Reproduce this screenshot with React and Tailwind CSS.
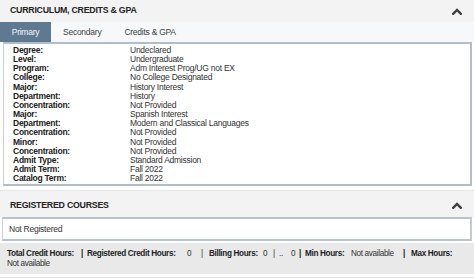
import React from "react";

const rows = [
  ["Degree:", "Undeclared"],
  ["Level:", "Undergraduate"],
  ["Program:", "Adm Interest Prog/UG not EX"],
  ["College:", "No College Designated"],
  ["Major:", "History Interest"],
  ["Department:", "History"],
  ["Concentration:", "Not Provided"],
  ["Major:", "Spanish Interest"],
  ["Department:", "Modern and Classical Languages"],
  ["Concentration:", "Not Provided"],
  ["Minor:", "Not Provided"],
  ["Concentration:", "Not Provided"],
  ["Admit Type:", "Standard Admission"],
  ["Admit Term:", "Fall 2022"],
  ["Catalog Term:", "Fall 2022"],
];

function Chevron() {
  return (
    <svg width="10" height="7" viewBox="0 0 10 7" className="block">
      <polyline points="1.2,5.8 5,2 8.8,5.8" fill="none" stroke="#3f3f3f" strokeWidth="2.4" strokeLinecap="square" />
    </svg>
  );
}

export default function App() {
  const seg = [
    ["Total Credit Hours:", true, "w-[74px]"],
    ["|", true, "w-[6px]"],
    ["Registered Credit Hours:", true, "w-[100px]"],
    ["0", false, "w-[14px]"],
    ["|", false, "w-[8px]"],
    ["Billing Hours:", true, "w-[54px]"],
    ["0", false, "w-[10px]"],
    ["|", false, "w-[6px]"],
    ["..", false, "w-[12px]"],
    ["0", false, "w-[8px]"],
    ["|", true, "w-[6px]"],
    ["Min Hours:", true, "w-[46px]"],
    ["Not available", false, "w-[52px]"],
    ["|", true, "w-[8px]"],
    ["Max Hours:", true, "w-auto"],
  ];
  return (
    <div className="w-[474px] h-[280px] overflow-hidden bg-white font-['Liberation_Sans',Arial,sans-serif] text-[8.5px] tracking-[-0.25px] text-[#222]">
      {/* Section 1 header */}
      <div className="h-[22px] bg-[#f3f3f3] flex items-center justify-between pl-[10px] pr-[12px]">
        <span className="font-bold text-[8.8px] tracking-[-0.25px] text-[#222]">CURRICULUM, CREDITS &amp; GPA</span>
        <Chevron />
      </div>
      {/* Tabs */}
      <div className="h-[20px] bg-[#f6f8fa] flex items-stretch">
        <div className="w-[51px] bg-[#5f7a90] text-[#f2f5f8] flex items-center justify-center">Primary</div>
        <div className="pl-[12px] flex items-center text-[#444]">Secondary</div>
        <div className="pl-[23px] flex items-center text-[#444]">Credits &amp; GPA</div>
      </div>
      {/* Content box */}
      <div className="ml-[3px] mr-[2px] border-t-2 border-r-2 border-b-2 border-l border-t-[#b1bdc8] border-r-[#b1bdc8] border-b-[#b1bdc8] border-l-[#c9d3dc] pt-[2px] pb-[1px] pl-[9px]">
        {rows.map(([k, v], i) => (
          <div key={i} className="grid grid-cols-[117px_1fr] leading-[9.15px]">
            <span className="font-bold text-[#222]">{k}</span>
            <span className="text-[#333]">{v}</span>
          </div>
        ))}
      </div>
      {/* gap */}
      <div className="h-[4px]" />
      {/* Section 2 header */}
      <div className="h-[27px] bg-[#f3f3f3] border-t border-[#e6e6e6] flex items-center justify-between pl-[10px] pr-[12px] pt-[2px]">
        <span className="font-bold text-[8.8px] tracking-[-0.25px] text-[#222]">REGISTERED COURSES</span>
        <Chevron />
      </div>
      <div className="ml-[2px] mr-[2px] h-[24px] border-t-2 border-r-2 border-b-2 border-l border-t-[#b8c3cd] border-r-[#c3ccd5] border-b-[#b8c3cd] border-l-[#c9d3dc] flex items-center pl-[6px] text-[#333]">
        Not Registered
      </div>
      <div className="h-[2px]" />
      {/* Footer */}
      <div className="h-[31px] bg-[#e9e9e9] pl-[7px] pt-[6px] leading-[10px] text-[8.2px] tracking-[-0.35px] text-[#333]">
        <div className="flex whitespace-nowrap">
          {seg.map(([t, b, w], i) => (
            <span key={i} className={`${w} ${b ? "font-bold text-[#222]" : ""}`}>{t}</span>
          ))}
        </div>
        <div>Not available</div>
      </div>
      <div className="h-[3px]" />
      <div className="border-t border-[#e4e4e4]" />
    </div>
  );
}
